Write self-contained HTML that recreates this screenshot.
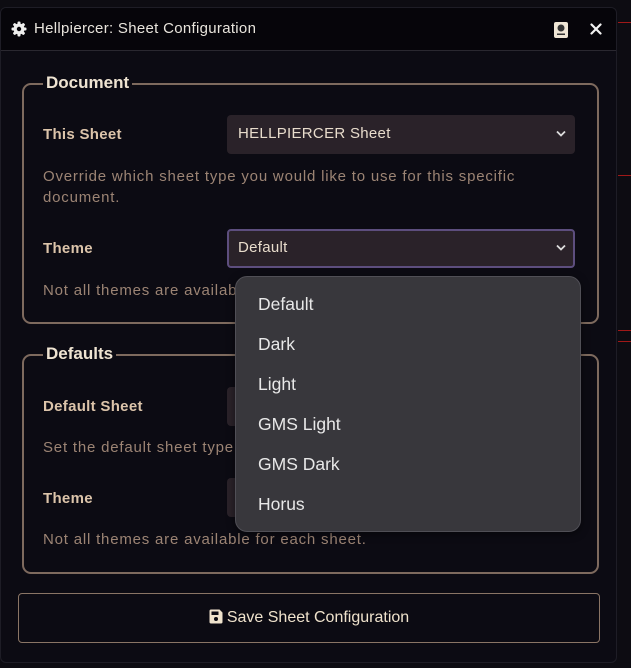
<!DOCTYPE html>
<html><head><meta charset="utf-8">
<style>
*{box-sizing:border-box;margin:0;padding:0}
html,body{width:631px;height:668px;overflow:hidden;background:#0d0c12}
body{position:relative;font-family:"Liberation Sans",sans-serif;}
.bgline{position:absolute;height:1px;background:#a01818}
.win{position:absolute;left:0;top:7px;width:617px;height:656px;background:#0c0b13;border:1px solid #1e1d26;border-radius:6px;overflow:hidden}
.hdr{position:absolute;left:0;top:0;width:100%;height:43px;background:#06050a;border-bottom:1px solid #2a2830}
.title{position:absolute;left:33px;top:12px;font-size:15px;color:#e8e4dc;letter-spacing:0.3px}
.fs{position:absolute;left:21px;width:577px;border:2px solid #7e6a5e;border-radius:9px}
.legend{position:absolute;top:-12px;left:19px;background:#0c0b13;padding:0 3px;font-weight:bold;font-size:17px;color:#efe4d2}
.lbl{position:absolute;left:43px;font-weight:bold;font-size:15px;color:#dcc4aa;letter-spacing:0.3px}
.hint{position:absolute;left:43px;font-size:15px;color:#9c8474;line-height:21px;letter-spacing:0.8px}
.sel{position:absolute;left:227px;width:348px;height:39px;background:#2a2229;border-radius:4px;color:#e8dccc;font-size:15px;padding:10px 11px;letter-spacing:0.3px}
.sel svg{position:absolute;right:9px;top:15px}
.dd{position:absolute;left:235px;top:276px;width:346px;height:256px;background:#38373c;border:1px solid #504f56;border-radius:12px;box-shadow:0 2px 8px rgba(0,0,0,.5)}
.dd div{position:absolute;left:22px;font-size:17.5px;color:#e8e8e8}
.btn{position:absolute;left:18px;top:593px;width:582px;height:50px;border:1.5px solid #8a7565;border-radius:4px;color:#efe2cc;font-size:16px;text-align:center;line-height:47px}
</style></head><body>
<div class="bgline" style="left:618px;top:22px;width:13px"></div>
<div class="bgline" style="left:618px;top:175px;width:13px"></div>
<div class="bgline" style="left:618px;top:330px;width:13px"></div>
<div class="bgline" style="left:618px;top:341px;width:13px"></div>
<div class="win">
 <div class="hdr">
  <svg style="position:absolute;left:10px;top:13px" width="16" height="16" viewBox="0 0 16 16"><g fill="#eee"><circle cx="8" cy="8" r="5.5"/><rect x="6.5" y="0.5" width="3" height="15" rx="1"/><rect x="0.5" y="6.5" width="15" height="3" rx="1"/><rect x="6.5" y="0.5" width="3" height="15" rx="1" transform="rotate(45 8 8)"/><rect x="6.5" y="0.5" width="3" height="15" rx="1" transform="rotate(-45 8 8)"/></g><circle cx="8" cy="8" r="2.2" fill="#06050a"/></svg>
  <div class="title">Hellpiercer: Sheet Configuration</div>
  <svg style="position:absolute;left:552px;top:13px" width="16" height="18" viewBox="0 0 16 18"><rect x="1" y="1" width="14" height="16" rx="2" fill="#efe6d6"/><circle cx="8" cy="7" r="3.5" fill="#333"/><rect x="4" y="12.5" width="8" height="1.5" fill="#333"/></svg>
  <svg style="position:absolute;left:589px;top:15px" width="12" height="12" viewBox="0 0 12 12"><path d="M1.5 1.5L10.5 10.5M10.5 1.5L1.5 10.5" stroke="#f2f2f2" stroke-width="2.2" stroke-linecap="round"/></svg>
 </div>
 <div class="fs" style="top:75px;height:241px"><div class="legend">Document</div></div>
 <div class="fs" style="top:346px;height:220px"><div class="legend">Defaults</div></div>
</div>
<div class="lbl" style="top:126px">This Sheet</div>
<div class="sel" style="top:115px">HELLPIERCER Sheet<svg width="10" height="7" viewBox="0 0 10 7"><path d="M1 1.5L5 5.5L9 1.5" fill="none" stroke="#ddd" stroke-width="1.8"/></svg></div>
<div class="hint" style="top:166px">Override which sheet type you would like to use for this specific<br>document.</div>
<div class="lbl" style="top:240px">Theme</div>
<div class="sel" style="top:229px;border:2px solid #5d4e7e;padding:8px 9px">Default<svg style="top:13px;right:7px" width="10" height="7" viewBox="0 0 10 7"><path d="M1 1.5L5 5.5L9 1.5" fill="none" stroke="#ddd" stroke-width="1.8"/></svg></div>
<div class="hint" style="top:280px">Not all themes are available for each sheet.</div>
<div class="lbl" style="top:398px">Default Sheet</div>
<div class="sel" style="top:387px">HELLPIERCER Sheet</div>
<div class="hint" style="top:437px">Set the default sheet type for this system.</div>
<div class="lbl" style="top:490px">Theme</div>
<div class="sel" style="top:478px">Default</div>
<div class="hint" style="top:529px">Not all themes are available for each sheet.</div>
<div class="dd">
 <div style="top:17px">Default</div>
 <div style="top:57px">Dark</div>
 <div style="top:97px">Light</div>
 <div style="top:137px">GMS Light</div>
 <div style="top:177px">GMS Dark</div>
 <div style="top:217px">Horus</div>
</div>
<div class="btn"><svg style="vertical-align:-2px;margin-right:4px" width="14" height="15" viewBox="0 0 14 15"><path d="M2 0.5h8.5l3 3V13a1.5 1.5 0 0 1-1.5 1.5H2A1.5 1.5 0 0 1 .5 13V2A1.5 1.5 0 0 1 2 .5z" fill="#efe2cc"/><rect x="2.5" y="2.5" width="7" height="3.5" fill="#0c0b13"/><circle cx="7" cy="10" r="2" fill="#0c0b13"/></svg>Save Sheet Configuration</div>
</body></html>
